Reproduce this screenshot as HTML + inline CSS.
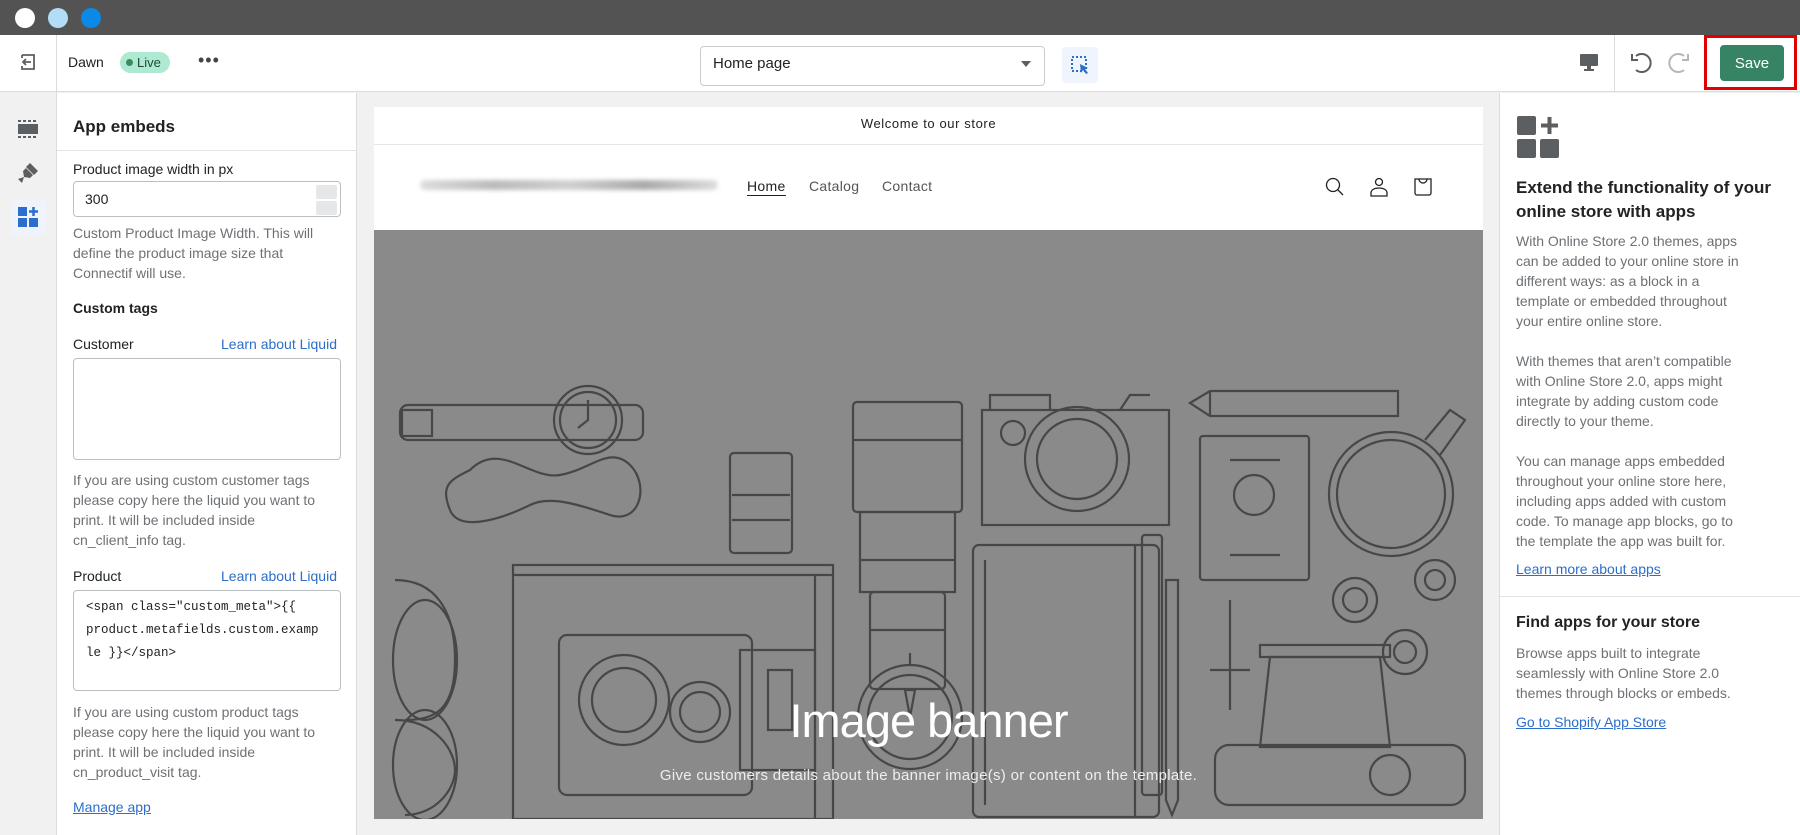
<!DOCTYPE html>
<html><head><meta charset="utf-8"><style>
*{box-sizing:border-box;margin:0;padding:0}
body{width:1800px;height:835px;overflow:hidden;background:#f1f1f1;font-family:"Liberation Sans",sans-serif;color:#202223;position:relative}
.abs{position:absolute}
.t{position:absolute;white-space:nowrap}
.sub{color:#6d7175;font-size:14px;line-height:20px}
a,.lnk{color:#2c6ecb;text-decoration:underline}
</style></head><body>
<div class="abs" style="left:0;top:0;width:1800px;height:35px;background:#535353"></div>
<div class="abs" style="left:15px;top:8px;width:20px;height:20px;border-radius:50%;background:#fff"></div>
<div class="abs" style="left:48px;top:8px;width:20px;height:20px;border-radius:50%;background:#b3dcf7"></div>
<div class="abs" style="left:81px;top:8px;width:20px;height:20px;border-radius:50%;background:#0a8ae6"></div>
<div class="abs" style="left:0;top:35px;width:1800px;height:57px;background:#fff;border-bottom:1px solid #dcdcdc"></div>
<div class="abs" style="left:56px;top:35px;width:1px;height:800px;background:#dcdcdc"></div>
<svg class="abs" style="left:18px;top:52px" width="20" height="20" viewBox="0 0 20 20"><path d="M4 3h12v14H4v-3M4 3v3" fill="none" stroke="#5c5f62" stroke-width="1.8"/><path d="M13 10H5M8 7l-3 3 3 3" fill="none" stroke="#5c5f62" stroke-width="1.8"/></svg>
<div class="t" style="left:68px;top:54px;font-size:14px">Dawn</div>
<div class="abs" style="left:120px;top:52px;width:50px;height:21px;border-radius:11px;background:#aee9d1"></div>
<div class="abs" style="left:126px;top:59px;width:7px;height:7px;border-radius:50%;background:#3d8a5f"></div>
<div class="t" style="left:137px;top:55px;font-size:13px;color:#1c4c35">Live</div>
<div class="t" style="left:198px;top:50px;font-size:18px;color:#444;letter-spacing:1px">•••</div>
<div class="abs" style="left:700px;top:46px;width:345px;height:40px;border:1px solid #c9cccf;border-radius:4px;background:#fff"></div>
<div class="t" style="left:713px;top:55px;font-size:15px">Home page</div>
<div class="abs" style="left:1021px;top:61px;width:0;height:0;border-left:5px solid transparent;border-right:5px solid transparent;border-top:6px solid #5c5f62"></div>
<div class="abs" style="left:1062px;top:47px;width:36px;height:36px;border-radius:4px;background:#f0f5fd"></div>
<svg class="abs" style="left:1070px;top:55px" width="22" height="22" viewBox="0 0 22 22"><rect x="2" y="2" width="14" height="14" fill="none" stroke="#2c6ecb" stroke-width="2" stroke-dasharray="2 2"/><path d="M10 9l8 4-3 1 3 4-2 1-3-4-2 3z" fill="#2c6ecb"/></svg>
<svg class="abs" style="left:1578px;top:51px" width="22" height="22" viewBox="0 0 22 22"><rect x="2" y="3" width="18" height="12" rx="1" fill="#5c5f62"/><rect x="9" y="15" width="4" height="3" fill="#5c5f62"/><rect x="6" y="18" width="10" height="2" fill="#5c5f62"/></svg>
<div class="abs" style="left:1614px;top:35px;width:1px;height:57px;background:#dcdcdc"></div>
<svg class="abs" style="left:1629px;top:50px" width="26" height="26" viewBox="0 0 26 26"><path d="M7 6a9 9 0 1 1 0 14" fill="none" stroke="#5c5f62" stroke-width="2"/><path d="M3 4v6h6" fill="none" stroke="#5c5f62" stroke-width="2"/></svg>
<svg class="abs" style="left:1665px;top:50px" width="26" height="26" viewBox="0 0 26 26"><path d="M19 6a9 9 0 1 0 0 14" fill="none" stroke="#b5b8bb" stroke-width="2"/><path d="M23 4v6h-6" fill="none" stroke="#b5b8bb" stroke-width="2"/></svg>
<div class="abs" style="left:1704px;top:35px;width:93px;height:55px;border:3px solid #e00000"></div>
<div class="abs" style="left:1720px;top:45px;width:64px;height:36px;border-radius:4px;background:#368463"></div>
<div class="t" style="left:1720px;top:55px;width:64px;text-align:center;font-size:15px;color:#fff">Save</div>
<svg class="abs" style="left:17px;top:119px" width="22" height="20" viewBox="0 0 22 20"><rect x="1" y="5" width="20" height="10" fill="#5c5f62"/><path d="M1 2h20M1 18h20" stroke="#5c5f62" stroke-width="2" stroke-dasharray="3 2"/></svg>
<svg class="abs" style="left:16px;top:161px" width="24" height="24" viewBox="0 0 24 24"><path d="M14 2l8 8-4 4-8-8z M10 7l7 7-3 3-6-1-2 6-4-4 6-2-1-6z" fill="#5c5f62"/></svg>
<div class="abs" style="left:11px;top:200px;width:35px;height:35px;border-radius:4px;background:#eef3fc"></div>
<svg class="abs" style="left:18px;top:207px" width="21" height="21" viewBox="0 0 21 21"><rect x="0" y="0" width="9" height="9" fill="#2c6ecb"/><rect x="0" y="11" width="9" height="9" fill="#2c6ecb"/><rect x="11" y="11" width="9" height="9" fill="#2c6ecb"/><path d="M15.5 0v9M11 4.5h9" stroke="#2c6ecb" stroke-width="2.5"/></svg>
<div class="abs" style="left:57px;top:93px;width:300px;height:742px;background:#fff;border-right:1px solid #dcdcdc"></div>
<div class="abs" style="left:57px;top:150px;width:300px;height:1px;background:#e1e3e5"></div>
<div class="t" style="left:73px;top:117px;font-size:17px;font-weight:bold">App embeds</div>
<div class="t" style="left:73px;top:161px;font-size:14px">Product image width in px</div>
<div class="abs" style="left:73px;top:181px;width:268px;height:36px;border:1px solid #babfc3;border-radius:4px"></div>
<div class="t" style="left:85px;top:191px;font-size:14px">300</div>
<div class="abs" style="left:316px;top:185px;width:21px;height:14px;background:#e6e7e8;border-radius:2px"></div>
<div class="abs" style="left:316px;top:201px;width:21px;height:14px;background:#e6e7e8;border-radius:2px"></div>
<div class="abs sub" style="left:73px;top:223px;width:260px">Custom Product Image Width. This will define the product image size that Connectif will use.</div>
<div class="t" style="left:73px;top:300px;font-size:14px;font-weight:bold">Custom tags</div>
<div class="t" style="left:73px;top:336px;font-size:14px">Customer</div>
<div class="t lnk" style="left:221px;top:336px;font-size:14px;text-decoration:none">Learn about Liquid</div>
<div class="abs" style="left:73px;top:358px;width:268px;height:102px;border:1px solid #babfc3;border-radius:4px"></div>
<div class="abs sub" style="left:73px;top:470px;width:265px;line-height:20px">If you are using custom customer tags please copy here the liquid you want to print. It will be included inside<br>cn_client_info tag.</div>
<div class="t" style="left:73px;top:568px;font-size:14px">Product</div>
<div class="t lnk" style="left:221px;top:568px;font-size:14px;text-decoration:none">Learn about Liquid</div>
<div class="abs" style="left:73px;top:590px;width:268px;height:101px;border:1px solid #babfc3;border-radius:4px"></div>
<div class="abs" style="left:86px;top:596px;font-family:'Liberation Mono',monospace;font-size:12.5px;line-height:23px;color:#202223;white-space:nowrap">&lt;span class="custom_meta"&gt;{{<br>product.metafields.custom.examp<br>le }}&lt;/span&gt;</div>
<div class="abs sub" style="left:73px;top:702px;width:265px;line-height:20px">If you are using custom product tags please copy here the liquid you want to print. It will be included inside<br>cn_product_visit tag.</div>
<div class="t lnk" style="left:73px;top:799px;font-size:14px">Manage app</div>
<div class="abs" style="left:374px;top:107px;width:1109px;height:123px;background:#fff"></div>
<div class="abs" style="left:374px;top:144px;width:1109px;height:1px;background:#e6e6e6"></div>
<div class="t" style="left:374px;top:116px;width:1109px;text-align:center;font-size:13px;letter-spacing:0.6px;color:#222">Welcome to our store</div>
<div class="abs" style="left:420px;top:180px;width:298px;height:10px;border-radius:5px;background:linear-gradient(90deg,#ddd,#bbb,#d0d0d0,#aaa,#ddd);filter:blur(2px)"></div>
<div class="t" style="left:747px;top:178px;font-size:14px;letter-spacing:0.3px;color:#222;border-bottom:1px solid #222;padding-bottom:1px">Home</div>
<div class="t" style="left:809px;top:178px;font-size:14px;letter-spacing:0.3px;color:#555">Catalog</div>
<div class="t" style="left:882px;top:178px;font-size:14px;letter-spacing:0.3px;color:#555">Contact</div>
<svg class="abs" style="left:1324px;top:176px" width="22" height="22" viewBox="0 0 22 22"><circle cx="9" cy="9" r="6.5" fill="none" stroke="#222" stroke-width="1.3"/><path d="M14 14l5 5" stroke="#222" stroke-width="1.3"/></svg>
<svg class="abs" style="left:1368px;top:176px" width="22" height="22" viewBox="0 0 22 22"><circle cx="11" cy="6" r="3.5" fill="none" stroke="#222" stroke-width="1.3"/><path d="M3 20v-3c0-3 3-5 8-5s8 2 8 5v3z" fill="none" stroke="#222" stroke-width="1.3"/></svg>
<svg class="abs" style="left:1412px;top:176px" width="22" height="22" viewBox="0 0 22 22"><path d="M3 3h16v14a2 2 0 0 1-2 2H5a2 2 0 0 1-2-2z M7 3a4 4 0 0 0 8 0" fill="none" stroke="#222" stroke-width="1.3"/></svg>
<div class="abs" style="left:374px;top:230px;width:1109px;height:589px;background:#8a8a8a;overflow:hidden">
<svg width="1109" height="589" viewBox="374 230 1109 589" style="position:absolute;left:0;top:0" fill="none" stroke="#474747" stroke-width="2.2">
<rect x="400" y="405" width="243" height="35" rx="8"/><rect x="402" y="410" width="30" height="26"/><circle cx="588" cy="420" r="34"/><circle cx="588" cy="420" r="28"/><path d="M588 400v20l-10 8"/>
<path d="M470 470c30-30 60 10 90 5s50-30 70-10 10 60-20 50-60-20-80-10-70 30-80 5 0-30 20-40z"/>
<rect x="730" y="453" width="62" height="100" rx="4"/><path d="M732 495h58M732 520h58"/>
<rect x="853" y="402" width="109" height="110" rx="4"/><rect x="860" y="512" width="95" height="80"/><rect x="870" y="592" width="75" height="97" rx="4"/><path d="M853 440h109M860 560h95M870 630h75"/>
<rect x="982" y="410" width="187" height="115"/><path d="M990 410v-15h60v15M1120 410l10-15h20"/><circle cx="1077" cy="459" r="52"/><circle cx="1077" cy="459" r="40"/><circle cx="1013" cy="433" r="12"/>
<path d="M1190 403l20-12h188v25h-188z"/><path d="M1210 391v25"/>
<rect x="1200" y="436" width="109" height="144" rx="3"/><circle cx="1254" cy="495" r="20"/><path d="M1230 460h50M1230 555h50"/>
<circle cx="1391" cy="494" r="62"/><circle cx="1391" cy="494" r="54"/><path d="M1425 440l25-30 15 10-25 35"/>
<path d="M395 580c40 0 60 30 60 80s-20 60-50 60M395 720c40 0 60 30 60 50s-20 45-50 45"/><ellipse cx="425" cy="660" rx="32" ry="60"/><ellipse cx="425" cy="765" rx="32" ry="55"/>
<rect x="513" y="565" width="320" height="254"/><path d="M513 575h320M815 575v244"/>
<rect x="559" y="635" width="193" height="160" rx="8"/><circle cx="624" cy="700" r="45"/><circle cx="624" cy="700" r="32"/><circle cx="700" cy="712" r="30"/><circle cx="700" cy="712" r="20"/><rect x="740" y="650" width="75" height="120"/><rect x="768" y="670" width="24" height="60"/>
<circle cx="910" cy="717" r="52"/><circle cx="910" cy="717" r="42"/><path d="M910 665v-12M905 690l5 27 5-27z"/>
<rect x="973" y="545" width="186" height="272" rx="6"/><path d="M1135 545v272M985 560v245"/>
<rect x="1142" y="535" width="20" height="260" rx="3"/><path d="M1178 580v220l-6 15-6-15v-220z"/>
<circle cx="1355" cy="600" r="22"/><circle cx="1355" cy="600" r="12"/><circle cx="1435" cy="580" r="20"/><circle cx="1435" cy="580" r="10"/><circle cx="1405" cy="652" r="22"/><circle cx="1405" cy="652" r="11"/>
<rect x="1260" y="645" width="130" height="12"/><path d="M1270 657h110l10 90H1260z"/><rect x="1215" y="745" width="250" height="60" rx="14"/><circle cx="1390" cy="775" r="20"/>
<path d="M1230 600v110M1210 670h40"/>
</svg>
<div class="t" style="left:0;top:461px;width:1109px;text-align:center;font-size:47px;letter-spacing:-1px;color:#fff;line-height:60px">Image banner</div>
<div class="t" style="left:0;top:537px;width:1109px;text-align:center;font-size:15px;color:#eee;letter-spacing:0.3px">Give customers details about the banner image(s) or content on the template.</div>
</div>
<div class="abs" style="left:1499px;top:93px;width:301px;height:742px;background:#fff;border-left:1px solid #dcdcdc"></div>
<svg class="abs" style="left:1517px;top:116px" width="43" height="43" viewBox="0 0 43 43"><rect x="0" y="0" width="19" height="19" rx="2" fill="#5c5f62"/><rect x="0" y="23" width="19" height="19" rx="2" fill="#5c5f62"/><rect x="23" y="23" width="19" height="19" rx="2" fill="#5c5f62"/><path d="M32.5 1v17M24 9.5h17" stroke="#5c5f62" stroke-width="4"/></svg>
<div class="abs" style="left:1516px;top:176px;width:270px;font-size:17px;font-weight:bold;line-height:24px">Extend the functionality of your online store with apps</div>
<div class="abs sub" style="left:1516px;top:231px;white-space:nowrap">With Online Store 2.0 themes, apps<br>can be added to your online store in<br>different ways: as a block in a<br>template or embedded throughout<br>your entire online store.<br><br>With themes that aren’t compatible<br>with Online Store 2.0, apps might<br>integrate by adding custom code<br>directly to your theme.<br><br>You can manage apps embedded<br>throughout your online store here,<br>including apps added with custom<br>code. To manage app blocks, go to<br>the template the app was built for.</div>
<div class="t lnk" style="left:1516px;top:561px;font-size:14px">Learn more about apps</div>
<div class="abs" style="left:1500px;top:596px;width:300px;height:1px;background:#e1e3e5"></div>
<div class="t" style="left:1516px;top:614px;font-size:16px;font-weight:bold">Find apps for your store</div>
<div class="abs sub" style="left:1516px;top:643px;white-space:nowrap">Browse apps built to integrate<br>seamlessly with Online Store 2.0<br>themes through blocks or embeds.</div>
<div class="t lnk" style="left:1516px;top:714px;font-size:14px">Go to Shopify App Store</div>
</body></html>
